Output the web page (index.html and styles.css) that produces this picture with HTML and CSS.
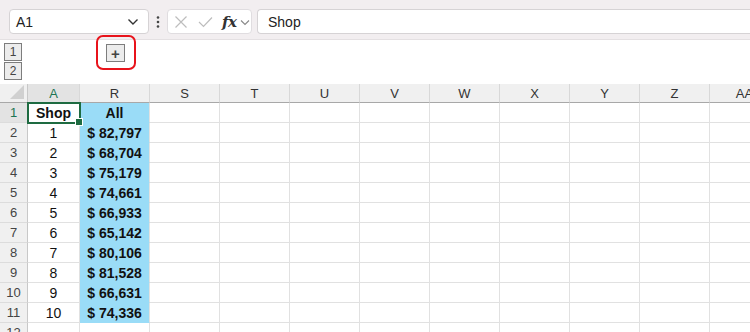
FILE: index.html
```html
<!DOCTYPE html>
<html>
<head>
<meta charset="utf-8">
<link rel="stylesheet" href="styles.css">
</head>
<body>
<div class="toolbar">
  <div class="namebox">
    <span class="nb-text">A1</span>
    <svg class="chev" width="12" height="8" viewBox="0 0 12 8"><path d="M1.5 1.5 L6 6 L10.5 1.5" fill="none" stroke="#333" stroke-width="1.4"/></svg>
  </div>
  <svg class="dots" width="4" height="14" viewBox="0 0 4 14"><circle cx="2" cy="2.5" r="1.3" fill="#444"/><circle cx="2" cy="7" r="1.3" fill="#444"/><circle cx="2" cy="11.5" r="1.3" fill="#444"/></svg>
  <div class="fxbox">
    <svg width="14" height="14" viewBox="0 0 14 14"><path d="M1.5 1.5 L12.5 12.5 M12.5 1.5 L1.5 12.5" stroke="#bdbdbd" stroke-width="1.2" fill="none"/></svg>
    <svg class="check" width="15" height="12" viewBox="0 0 15 12"><path d="M1 6 L5.5 10.5 L14 1.5" stroke="#bdbdbd" stroke-width="1.2" fill="none"/></svg>
    <span class="fx">fx</span>
    <svg class="chev2" width="10" height="7" viewBox="0 0 10 7"><path d="M1 1.5 L5 5.5 L9 1.5" fill="none" stroke="#888" stroke-width="1.1"/></svg>
  </div>
  <div class="formula">Shop</div>
</div>
<div class="outline">
  <div class="levels">
    <div class="lvl">1</div>
    <div class="lvl">2</div>
  </div>
  <div class="plus-wrap">
    <div class="plus">+</div>
    <div class="ring"></div>
  </div>
</div>
<div class="grid">
  <div class="ch corner"><svg width="14" height="14" viewBox="0 0 14 14"><path d="M14 0 L14 14 L0 14 Z" fill="#d0d0d0"/></svg></div>
  <div class="ch sel">A</div>
  <div class="ch">R</div>
  <div class="ch">S</div>
  <div class="ch">T</div>
  <div class="ch">U</div>
  <div class="ch">V</div>
  <div class="ch">W</div>
  <div class="ch">X</div>
  <div class="ch">Y</div>
  <div class="ch">Z</div>
  <div class="ch">AA</div>

  <div class="rh sel">1</div><div class="c a b active">Shop</div><div class="c r b">All</div><div class="c"></div><div class="c"></div><div class="c"></div><div class="c"></div><div class="c"></div><div class="c"></div><div class="c"></div><div class="c"></div><div class="c"></div>
  <div class="rh">2</div><div class="c a">1</div><div class="c r b">$ 82,797</div><div class="c"></div><div class="c"></div><div class="c"></div><div class="c"></div><div class="c"></div><div class="c"></div><div class="c"></div><div class="c"></div><div class="c"></div>
  <div class="rh">3</div><div class="c a">2</div><div class="c r b">$ 68,704</div><div class="c"></div><div class="c"></div><div class="c"></div><div class="c"></div><div class="c"></div><div class="c"></div><div class="c"></div><div class="c"></div><div class="c"></div>
  <div class="rh">4</div><div class="c a">3</div><div class="c r b">$ 75,179</div><div class="c"></div><div class="c"></div><div class="c"></div><div class="c"></div><div class="c"></div><div class="c"></div><div class="c"></div><div class="c"></div><div class="c"></div>
  <div class="rh">5</div><div class="c a">4</div><div class="c r b">$ 74,661</div><div class="c"></div><div class="c"></div><div class="c"></div><div class="c"></div><div class="c"></div><div class="c"></div><div class="c"></div><div class="c"></div><div class="c"></div>
  <div class="rh">6</div><div class="c a">5</div><div class="c r b">$ 66,933</div><div class="c"></div><div class="c"></div><div class="c"></div><div class="c"></div><div class="c"></div><div class="c"></div><div class="c"></div><div class="c"></div><div class="c"></div>
  <div class="rh">7</div><div class="c a">6</div><div class="c r b">$ 65,142</div><div class="c"></div><div class="c"></div><div class="c"></div><div class="c"></div><div class="c"></div><div class="c"></div><div class="c"></div><div class="c"></div><div class="c"></div>
  <div class="rh">8</div><div class="c a">7</div><div class="c r b">$ 80,106</div><div class="c"></div><div class="c"></div><div class="c"></div><div class="c"></div><div class="c"></div><div class="c"></div><div class="c"></div><div class="c"></div><div class="c"></div>
  <div class="rh">9</div><div class="c a">8</div><div class="c r b">$ 81,528</div><div class="c"></div><div class="c"></div><div class="c"></div><div class="c"></div><div class="c"></div><div class="c"></div><div class="c"></div><div class="c"></div><div class="c"></div>
  <div class="rh">10</div><div class="c a">9</div><div class="c r b">$ 66,631</div><div class="c"></div><div class="c"></div><div class="c"></div><div class="c"></div><div class="c"></div><div class="c"></div><div class="c"></div><div class="c"></div><div class="c"></div>
  <div class="rh">11</div><div class="c a">10</div><div class="c r b">$ 74,336</div><div class="c"></div><div class="c"></div><div class="c"></div><div class="c"></div><div class="c"></div><div class="c"></div><div class="c"></div><div class="c"></div><div class="c"></div>
  <div class="rh">12</div><div class="c a"></div><div class="c"></div><div class="c"></div><div class="c"></div><div class="c"></div><div class="c"></div><div class="c"></div><div class="c"></div><div class="c"></div><div class="c"></div><div class="c"></div>
</div>
</body>
</html>
```

FILE: styles.css
```css
html, body {
  margin: 0;
  padding: 0;
  width: 750px;
  height: 332px;
  overflow: hidden;
  background: #ffffff;
  font-family: "Liberation Sans", Arial, sans-serif;
}

.toolbar {
  height: 40px;
  box-sizing: border-box;
  padding: 9px 0 0 9px;
  background: #f2eef0;
  display: flex;
  align-items: flex-start;
  border-bottom: 1px solid #e4e0e2;
}

.namebox {
  width: 140px;
  height: 25px;
  box-sizing: border-box;
  background: #fff;
  border: 1px solid #d6d3d5;
  border-radius: 4px;
  display: flex;
  align-items: center;
  justify-content: space-between;
  padding: 0 9px 0 6px;
  font-size: 14px;
  color: #222;
}

.chev { margin-top: 1px; }

.dots {
  margin: 6px 7px 0 7px;
}

.fxbox {
  width: 85px;
  height: 25px;
  box-sizing: border-box;
  background: #fff;
  border: 1px solid #e0dde0;
  border-radius: 4px;
  display: flex;
  align-items: center;
  padding: 0 0 0 6px;
}

.check { margin-left: 10px; }

.fx {
  font-family: "DejaVu Serif", "Liberation Serif", serif;
  font-style: italic;
  font-weight: bold;
  font-size: 15px;
  color: #333;
  margin-left: 9px;
  letter-spacing: -0.5px;
}

.chev2 { margin-left: 4px; margin-top: 1px; }

.formula {
  flex: 1;
  height: 25px;
  box-sizing: border-box;
  margin-left: 5px;
  background: #fff;
  border: 1px solid #d6d3d5;
  border-right: none;
  border-radius: 4px 0 0 4px;
  padding: 0 0 0 10px;
  display: flex;
  align-items: center;
  font-size: 14px;
  color: #222;
}

.outline {
  height: 44px;
  display: flex;
  align-items: flex-start;
}

.levels {
  display: flex;
  flex-direction: column;
  margin: 3px 0 0 4px;
}

.lvl {
  width: 18px;
  height: 18px;
  box-sizing: border-box;
  border: 1px solid #7d7d7d;
  background: #ececec;
  font-size: 12px;
  color: #444;
  display: flex;
  align-items: center;
  justify-content: center;
  margin-bottom: 1px;
}

.plus-wrap {
  position: relative;
  margin: 4px 0 0 84px;
}

.plus {
  width: 19px;
  height: 18px;
  box-sizing: border-box;
  border: 1px solid #7d7d7d;
  background: #ececec;
  font-size: 15px;
  font-weight: bold;
  color: #444;
  display: flex;
  align-items: center;
  justify-content: center;
  line-height: 1;
}

.ring {
  position: absolute;
  left: -10px;
  top: -9px;
  width: 40px;
  height: 35px;
  box-sizing: border-box;
  border: 2px solid #e8131b;
  border-radius: 7px;
}

.grid {
  display: grid;
  grid-template-columns: 28px 52px repeat(10, 70px);
  grid-template-rows: 19px repeat(12, 20px);
  width: 780px;
}

.ch {
  box-sizing: border-box;
  background: #f0f0f0;
  border-right: 1px solid #d8d8d8;
  border-bottom: 1px solid #a8a8a8;
  display: flex;
  align-items: center;
  justify-content: center;
  font-size: 13px;
  color: #333;
}

.ch.corner {
  align-items: flex-end;
  justify-content: flex-end;
  padding: 0 3px 3px 0;
  border-right: 1px solid #c8c8c8;
}

.ch.sel {
  background: #e3e3e3;
  color: #1d7553;
}

.rh {
  box-sizing: border-box;
  background: #f0f0f0;
  border-right: 1px solid #c8c8c8;
  border-bottom: 1px solid #dcdcdc;
  display: flex;
  align-items: center;
  justify-content: center;
  font-size: 13px;
  color: #444;
}

.rh.sel {
  background: #e3e3e3;
  color: #1d7553;
}

.c {
  box-sizing: border-box;
  border-right: 1px solid #e1e1e1;
  border-bottom: 1px solid #e1e1e1;
  display: flex;
  align-items: center;
  justify-content: center;
  font-size: 14px;
  color: #111;
}

.c.b { font-weight: bold; }

.c.r {
  background: #9adcf7;
  border-bottom-color: #9adcf7;
}

.c.active {
  position: relative;
}

.c.active::after {
  content: "";
  position: absolute;
  left: -1px;
  top: -1px;
  right: -2px;
  bottom: -2px;
  border: 2px solid #1e6b41;
}

.c.active::before {
  content: "";
  position: absolute;
  right: -4px;
  bottom: -4px;
  width: 6px;
  height: 6px;
  background: #1e6b41;
  border: 1px solid #fff;
  z-index: 2;
}
```
